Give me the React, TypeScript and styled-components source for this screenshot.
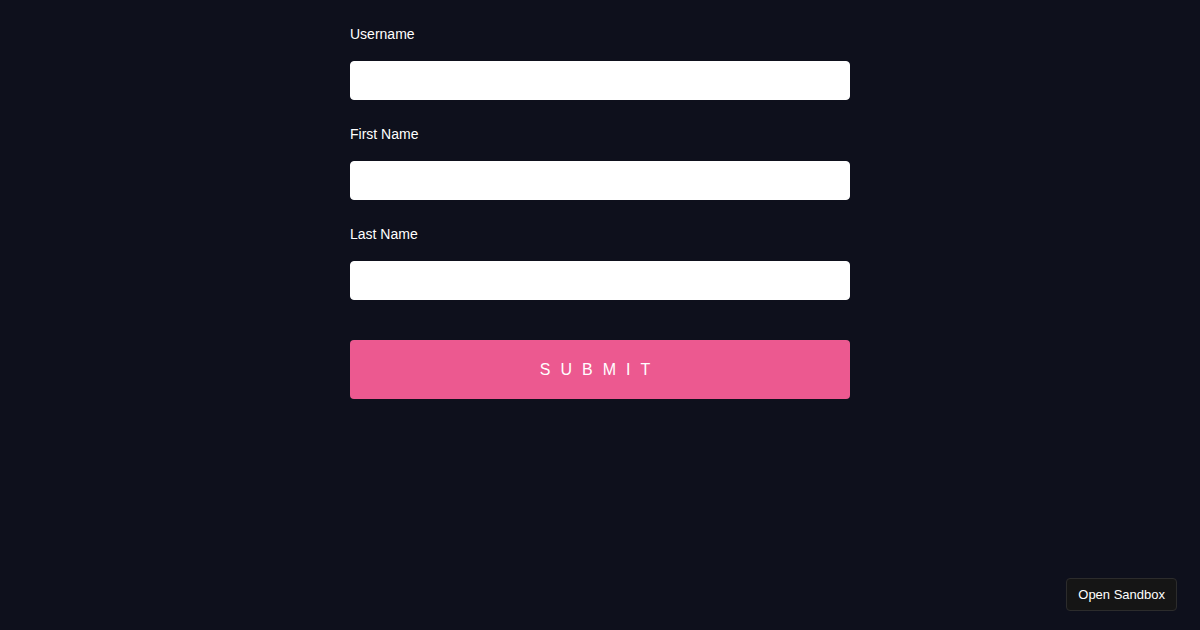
import styled, { createGlobalStyle } from 'styled-components'

// ** Styles **
const GlobalStyle = createGlobalStyle`
  html, body {
    margin: 0;
    padding: 0;
    background: #0e101c;
    height: 100%;
  }

  body {
    font-family: "Liberation Sans", Arial, Helvetica, sans-serif;
    color: #ffffff;
  }
`

const Page = styled.div`
  position: relative;
  width: 1200px;
  height: 630px;
  overflow: hidden;
  display: flow-root;
`

const Form = styled.form`
  max-width: 500px;
  margin: 0 auto;
`

const Label = styled.label`
  display: block;
  line-height: 2;
  text-align: left;
  margin-top: 20px;
  margin-bottom: 13px;
  color: #ffffff;
  font-size: 14px;
  font-weight: 200;
`

const Input = styled.input`
  display: block;
  box-sizing: border-box;
  width: 100%;
  height: 39px;
  border-radius: 4px;
  border: 1px solid #ffffff;
  background: #ffffff;
  padding: 10px 15px;
  margin-bottom: 10px;
  font-size: 14px;
  font-family: inherit;
  outline: none;
`

const SubmitButton = styled.button`
  display: block;
  width: 100%;
  margin-top: 40px;
  padding: 20px;
  background: #ec5990;
  color: #ffffff;
  border: none;
  border-radius: 4px;
  text-transform: uppercase;
  font-family: inherit;
  font-size: 16px;
  font-weight: 100;
  line-height: 19px;
  letter-spacing: 10px;
  cursor: pointer;
`

const SandboxLink = styled.a`
  position: absolute;
  right: 23px;
  bottom: 19px;
  height: 33px;
  box-sizing: border-box;
  padding: 0 11px;
  display: flex;
  align-items: center;
  background: #151515;
  border: 1px solid #2c2c2c;
  border-radius: 4px;
  color: #ffffff;
  font-family: "Liberation Sans", Arial, sans-serif;
  font-size: 13px;
  text-decoration: none;
`

// ** Components **
export default function App() {
  return (
    <Page>
      <GlobalStyle />
      <Form onSubmit={e => e.preventDefault()}>
        <Label htmlFor="username">Username</Label>
        <Input id="username" name="username" />
        <Label htmlFor="firstName">First Name</Label>
        <Input id="firstName" name="firstName" />
        <Label htmlFor="lastName">Last Name</Label>
        <Input id="lastName" name="lastName" />
        <SubmitButton type="submit">Submit</SubmitButton>
      </Form>
      <SandboxLink href="#">Open Sandbox</SandboxLink>
    </Page>
  )
}
